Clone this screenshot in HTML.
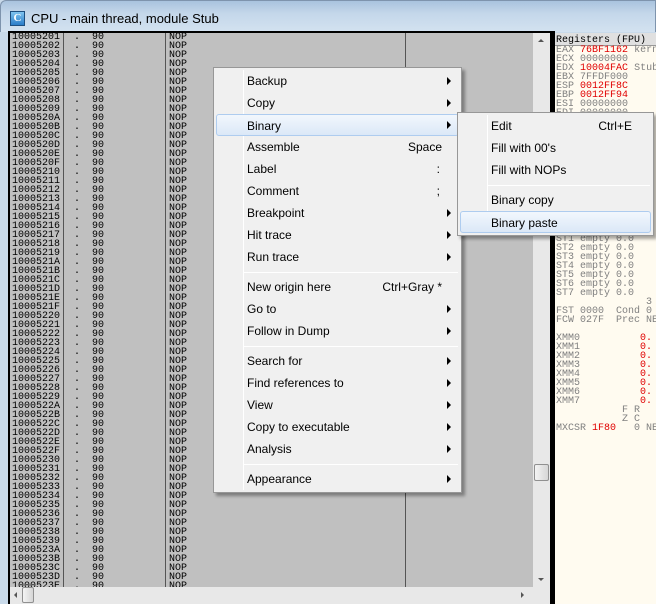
<!DOCTYPE html>
<html><head><meta charset="utf-8"><style>
*{margin:0;padding:0;box-sizing:border-box}
body{width:656px;height:604px;overflow:hidden;background:#c9daea;font-family:"Liberation Sans",sans-serif;position:relative}
.title{position:absolute;left:0;top:0;width:656px;height:32px;background:linear-gradient(#a9c3de,#c4d7ea 40%,#d3e2f0);border-top-left-radius:6px;border:1px solid #7e94ad;border-bottom:none}
.title .ic{position:absolute;left:9px;top:10px;width:15px;height:15px;background:linear-gradient(#7fc4f0,#2a7dc8);border:1px solid #1d4f80;color:#fff;font:bold 11px "Liberation Serif",serif;text-align:center;line-height:13px}
.title .t{position:absolute;left:30px;top:10px;font-size:13px;color:#000}
.dis{position:absolute;left:8px;top:31px;width:547px;height:573px;background:#000}
.dl{position:absolute;left:10px;top:33px;width:523px;height:554px;background:#c0c0c0;overflow:hidden}
pre{font-family:"Liberation Mono",monospace;font-size:10px;line-height:9px;color:#000;position:absolute}
.vl{position:absolute;top:0;width:1px;height:554px;background:#555}
.vs{position:absolute;left:533px;top:33px;width:17px;height:554px;background:#e8e8e8}
.hs{position:absolute;left:10px;top:587px;width:540px;height:17px;background:#e8e8e8}
.thumb{position:absolute;background:linear-gradient(90deg,#f4f4f4,#d6d6d6);border:1px solid #909090;border-radius:2px}
.reg{position:absolute;left:555px;top:33px;width:101px;height:571px;background:#fffbf0;overflow:hidden}
.rh{position:absolute;left:0;top:0;width:101px;height:13px;background:#e0e0e0;border-bottom:1px solid #999}
.g{color:#808080}.r{color:#e00000}
.menu{position:absolute;background:#f0f0f0;border:1px solid #979797;box-shadow:3px 3px 3px rgba(0,0,0,.35);font-size:12px;color:#000}
.menu .gut{position:absolute;top:2px;bottom:2px;width:1px;background:#e2e3e3;border-right:1px solid #fff}
.it{position:absolute;left:2px;right:2px;height:22px;line-height:22px}
.it .l{position:absolute}
.it .k{position:absolute;text-align:right}
.it .a{position:absolute;top:7px;width:0;height:0;border-top:4px solid transparent;border-bottom:4px solid transparent;border-left:4px solid #000}
.hl{background:linear-gradient(#f2f7fd,#dbe8f7);border:1px solid #aeccef;border-radius:3px}
.sep{position:absolute;height:1px;background:#d7d7d7;border-bottom:1px solid #fff}
</style></head><body>
<div class="title"><div class="ic">C</div><div class="t">CPU - main thread, module Stub</div></div>
<div class="dis"></div>
<div class="dl">
<div class="vl" style="left:53px"></div><div class="vl" style="left:155px"></div><div class="vl" style="left:395px"></div>
<pre style="left:2px;top:0">10005201
10005202
10005203
10005204
10005205
10005206
10005207
10005208
10005209
1000520A
1000520B
1000520C
1000520D
1000520E
1000520F
10005210
10005211
10005212
10005213
10005214
10005215
10005216
10005217
10005218
10005219
1000521A
1000521B
1000521C
1000521D
1000521E
1000521F
10005220
10005221
10005222
10005223
10005224
10005225
10005226
10005227
10005228
10005229
1000522A
1000522B
1000522C
1000522D
1000522E
1000522F
10005230
10005231
10005232
10005233
10005234
10005235
10005236
10005237
10005238
10005239
1000523A
1000523B
1000523C
1000523D
1000523E</pre>
<pre style="left:64px;top:0">.  90
.  90
.  90
.  90
.  90
.  90
.  90
.  90
.  90
.  90
.  90
.  90
.  90
.  90
.  90
.  90
.  90
.  90
.  90
.  90
.  90
.  90
.  90
.  90
.  90
.  90
.  90
.  90
.  90
.  90
.  90
.  90
.  90
.  90
.  90
.  90
.  90
.  90
.  90
.  90
.  90
.  90
.  90
.  90
.  90
.  90
.  90
.  90
.  90
.  90
.  90
.  90
.  90
.  90
.  90
.  90
.  90
.  90
.  90
.  90
.  90
.  90</pre>
<pre style="left:159px;top:0">NOP
NOP
NOP
NOP
NOP
NOP
NOP
NOP
NOP
NOP
NOP
NOP
NOP
NOP
NOP
NOP
NOP
NOP
NOP
NOP
NOP
NOP
NOP
NOP
NOP
NOP
NOP
NOP
NOP
NOP
NOP
NOP
NOP
NOP
NOP
NOP
NOP
NOP
NOP
NOP
NOP
NOP
NOP
NOP
NOP
NOP
NOP
NOP
NOP
NOP
NOP
NOP
NOP
NOP
NOP
NOP
NOP
NOP
NOP
NOP
NOP
NOP</pre>
</div>
<div class="vs"><div class="thumb" style="left:1px;top:431px;width:15px;height:17px"></div>
<div style="position:absolute;left:5px;top:6px;border-left:3px solid transparent;border-right:3px solid transparent;border-bottom:3px solid #555"></div>
<div style="position:absolute;left:5px;top:545px;border-left:3px solid transparent;border-right:3px solid transparent;border-top:3px solid #555"></div></div>
<div class="hs"><div class="thumb" style="left:12px;top:0;width:12px;height:16px"></div>
<div style="position:absolute;left:4px;top:5px;border-top:3px solid transparent;border-bottom:3px solid transparent;border-right:3px solid #555"></div>
<div style="position:absolute;left:511px;top:5px;border-top:3px solid transparent;border-bottom:3px solid transparent;border-left:3px solid #555"></div></div>
<div class="reg"><div class="rh"></div>
<pre style="left:1px;top:3px">Registers (FPU)</pre>
<pre style="left:1px;top:13px"><span class="g">EAX</span> <span class="r">76BF1162</span> <span class="g">kern</span>
<span class="g">ECX 00000000</span>
<span class="g">EDX</span> <span class="r">10004FAC</span> <span class="g">Stub</span>
<span class="g">EBX 7FFDF000</span>
<span class="g">ESP</span> <span class="r">0012FF8C</span>
<span class="g">EBP</span> <span class="r">0012FF94</span>
<span class="g">ESI 00000000</span>
<span class="g">EDI 00000000</span>









<span class="g">L</span>

<span class="r">C</span>

<span class="g">ST1 empty 0.0
ST2 empty 0.0
ST3 empty 0.0
ST4 empty 0.0
ST5 empty 0.0
ST6 empty 0.0
ST7 empty 0.0
               3
FST 0000  Cond 0
FCW 027F  Prec NE

XMM0          </span><span class="r">0.</span>
<span class="g">XMM1          </span><span class="r">0.</span>
<span class="g">XMM2          </span><span class="r">0.</span>
<span class="g">XMM3          </span><span class="r">0.</span>
<span class="g">XMM4          </span><span class="r">0.</span>
<span class="g">XMM5          </span><span class="r">0.</span>
<span class="g">XMM6          </span><span class="r">0.</span>
<span class="g">XMM7          </span><span class="r">0.</span>
<span class="g">           F R
           Z C
MXCSR </span><span class="r">1F80</span><span class="g">   0 NEA</span></pre></div>

<div class="menu" style="left:213px;top:67px;width:249px;height:426px"><div class="gut" style="left:29px"></div>
<div class="it" style="top:2px"><span class="l" style="left:31px">Backup</span><span class="a" style="left:231px"></span></div>
<div class="it" style="top:24px"><span class="l" style="left:31px">Copy</span><span class="a" style="left:231px"></span></div>
<div class="it hl" style="top:46px"><span class="l" style="left:30px">Binary</span><span class="a" style="left:230px;top:6px"></span></div>
<div class="it" style="top:68px"><span class="l" style="left:31px">Assemble</span><span class="k" style="right:17px">Space</span></div>
<div class="it" style="top:90px"><span class="l" style="left:31px">Label</span><span class="k" style="right:19px">:</span></div>
<div class="it" style="top:112px"><span class="l" style="left:31px">Comment</span><span class="k" style="right:19px">;</span></div>
<div class="it" style="top:134px"><span class="l" style="left:31px">Breakpoint</span><span class="a" style="left:231px"></span></div>
<div class="it" style="top:156px"><span class="l" style="left:31px">Hit trace</span><span class="a" style="left:231px"></span></div>
<div class="it" style="top:178px"><span class="l" style="left:31px">Run trace</span><span class="a" style="left:231px"></span></div>
<div class="sep" style="left:30px;right:3px;top:204px"></div>
<div class="it" style="top:208px"><span class="l" style="left:31px">New origin here</span><span class="k" style="right:17px">Ctrl+Gray *</span></div>
<div class="it" style="top:230px"><span class="l" style="left:31px">Go to</span><span class="a" style="left:231px"></span></div>
<div class="it" style="top:252px"><span class="l" style="left:31px">Follow in Dump</span><span class="a" style="left:231px"></span></div>
<div class="sep" style="left:30px;right:3px;top:278px"></div>
<div class="it" style="top:282px"><span class="l" style="left:31px">Search for</span><span class="a" style="left:231px"></span></div>
<div class="it" style="top:304px"><span class="l" style="left:31px">Find references to</span><span class="a" style="left:231px"></span></div>
<div class="it" style="top:326px"><span class="l" style="left:31px">View</span><span class="a" style="left:231px"></span></div>
<div class="it" style="top:348px"><span class="l" style="left:31px">Copy to executable</span><span class="a" style="left:231px"></span></div>
<div class="it" style="top:370px"><span class="l" style="left:31px">Analysis</span><span class="a" style="left:231px"></span></div>
<div class="sep" style="left:30px;right:3px;top:396px"></div>
<div class="it" style="top:400px"><span class="l" style="left:31px">Appearance</span><span class="a" style="left:231px"></span></div>
</div>

<div class="menu" style="left:457px;top:112px;width:197px;height:124px"><div class="gut" style="left:29px"></div>
<div class="it" style="top:2px"><span class="l" style="left:31px">Edit</span><span class="k" style="right:19px">Ctrl+E</span></div>
<div class="it" style="top:24px"><span class="l" style="left:31px">Fill with 00's</span></div>
<div class="it" style="top:46px"><span class="l" style="left:31px">Fill with NOPs</span></div>
<div class="sep" style="left:30px;right:3px;top:72px"></div>
<div class="it" style="top:76px"><span class="l" style="left:31px">Binary copy</span></div>
<div class="it hl" style="top:98px"><span class="l" style="left:30px">Binary paste</span></div>
</div>
</body></html>
